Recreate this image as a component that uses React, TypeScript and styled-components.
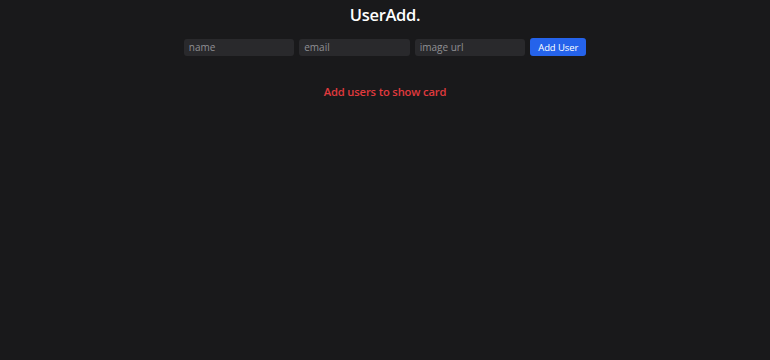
import { createGlobalStyle, styled } from "styled-components";

const GlobalStyle = createGlobalStyle`
	* {
		box-sizing: border-box;
	}

	body {
		margin: 0;
		background: #19191b;
		font-family: "Open Sans", "Noto Sans", sans-serif;
		color: #ffffff;
	}
`;

const App = () => {
	return (
		<>
			<GlobalStyle />
			<Page>
				<Title>UserAdd.</Title>
				<Form onSubmit={(e) => e.preventDefault()}>
					<Input type="text" placeholder="name" />
					<Input type="text" placeholder="email" />
					<Input type="text" placeholder="image url" />
					<AddButton type="submit">Add User</AddButton>
				</Form>
				<Empty>Add users to show card</Empty>
			</Page>
		</>
	);
};

export default App;

const Page = styled.main`
	width: 100%;
	min-height: 100vh;
	display: flex;
	flex-direction: column;
	align-items: center;
	padding-top: 4px;
`;

const Title = styled.h1`
	margin: 0;
	font-size: 16.5px;
	line-height: 22px;
	font-weight: 600;
	letter-spacing: -0.3px;
	color: #ffffff;
`;

const Form = styled.form`
	display: flex;
	align-items: center;
	gap: 5px;
	margin-top: 12px;
`;

const Input = styled.input`
	width: 110.5px;
	height: 17px;
	padding: 0 5px;
	border: none;
	outline: none;
	border-radius: 3px;
	background: #29292c;
	color: #e5e5e5;
	font-family: inherit;
	font-size: 10px;

	&::placeholder {
		color: #909094;
	}
`;

const AddButton = styled.button`
	height: 18px;
	padding: 0 8px;
	border: none;
	border-radius: 3px;
	background: #2563eb;
	color: #ffffff;
	font-family: inherit;
	font-size: 9.5px;
	letter-spacing: -0.1px;
	cursor: pointer;
`;

const Empty = styled.p`
	margin: 28px 0 0;
	font-size: 11.2px;
	line-height: 15px;
	font-weight: 600;
	letter-spacing: -0.15px;
	color: #e03a3e;
`;
